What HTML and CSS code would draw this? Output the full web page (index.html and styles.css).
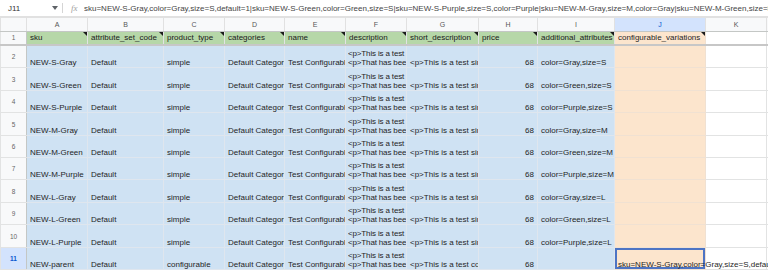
FILE: index.html
```html
<!DOCTYPE html>
<html lang="en">
<head>
  <meta charset="UTF-8" />
  <title>Products sheet</title>
  <link rel="stylesheet" href="styles.css">
</head>
<body>
  <div class="formula-bar">
    <div class="name-box">J11</div>
    <svg class="name-arrow" width="6" height="4" viewBox="0 0 6 4"><path d="M0 0h6L3 4z" fill="#5f6368"/></svg>
    <div class="bar-sep"></div>
    <span class="fx">fx</span>
    <div class="formula">sku=NEW-S-Gray,color=Gray,size=S,default=1|sku=NEW-S-Green,color=Green,size=S|sku=NEW-S-Purple,size=S,color=Purple|sku=NEW-M-Gray,size=M,color=Gray|sku=NEW-M-Green,size=M,color=Green|sku=NEW-M-Purple,size=M,color=Purple</div>
  </div>

  <table class="sheet">
    <colgroup>
      <col class="w-rn"><col class="w-a"><col class="w-b"><col class="w-c"><col class="w-d"><col class="w-e">
      <col class="w-f"><col class="w-g"><col class="w-h"><col class="w-i"><col class="w-j"><col class="w-k"><col class="w-l">
    </colgroup>
    <thead>
      <tr>
        <th class="corner"></th>
        <th>A</th><th>B</th><th>C</th><th>D</th><th>E</th><th>F</th>
        <th>G</th><th>H</th><th>I</th><th class="sel-col">J</th><th>K</th><th></th>
      </tr>
    </thead>
    <tbody>
      <tr class="head-row">
        <th class="rn">1</th>
        <td class="green note">sku</td>
        <td class="green note">attribute_set_code</td>
        <td class="green note">product_type</td>
        <td class="green note">categories</td>
        <td class="green note">name</td>
        <td class="green note">description</td>
        <td class="green note">short_description</td>
        <td class="green note">price</td>
        <td class="green note">additional_attributes</td>
        <td class="orange note">configurable_variations</td>
        <td></td><td></td>
      </tr>
      <!-- product rows -->
      <tr class="r22">
        <th class="rn">2</th>
        <td class="blue">NEW-S-Gray</td><td class="blue">Default</td><td class="blue">simple</td>
        <td class="blue">Default Category</td><td class="blue">Test Configurable</td>
        <td class="blue two"><div>&lt;p&gt;This is a test</div><div>&lt;p&gt;That has been</div></td>
        <td class="blue">&lt;p&gt;This is a test simple</td><td class="blue num">68</td>
        <td class="blue">color=Gray,size=S</td><td class="orange"></td><td></td><td></td>
      </tr>
      <tr class="r23">
        <th class="rn">3</th>
        <td class="blue">NEW-S-Green</td><td class="blue">Default</td><td class="blue">simple</td>
        <td class="blue">Default Category</td><td class="blue">Test Configurable</td>
        <td class="blue two"><div>&lt;p&gt;This is a test</div><div>&lt;p&gt;That has been</div></td>
        <td class="blue">&lt;p&gt;This is a test simple</td><td class="blue num">68</td>
        <td class="blue">color=Green,size=S</td><td class="orange"></td><td></td><td></td>
      </tr>
      <tr class="r22">
        <th class="rn">4</th>
        <td class="blue">NEW-S-Purple</td><td class="blue">Default</td><td class="blue">simple</td>
        <td class="blue">Default Category</td><td class="blue">Test Configurable</td>
        <td class="blue two"><div>&lt;p&gt;This is a test</div><div>&lt;p&gt;That has been</div></td>
        <td class="blue">&lt;p&gt;This is a test simple</td><td class="blue num">68</td>
        <td class="blue">color=Purple,size=S</td><td class="orange"></td><td></td><td></td>
      </tr>
      <tr class="r23">
        <th class="rn">5</th>
        <td class="blue">NEW-M-Gray</td><td class="blue">Default</td><td class="blue">simple</td>
        <td class="blue">Default Category</td><td class="blue">Test Configurable</td>
        <td class="blue two"><div>&lt;p&gt;This is a test</div><div>&lt;p&gt;That has been</div></td>
        <td class="blue">&lt;p&gt;This is a test simple</td><td class="blue num">68</td>
        <td class="blue">color=Gray,size=M</td><td class="orange"></td><td></td><td></td>
      </tr>
      <tr class="r22">
        <th class="rn">6</th>
        <td class="blue">NEW-M-Green</td><td class="blue">Default</td><td class="blue">simple</td>
        <td class="blue">Default Category</td><td class="blue">Test Configurable</td>
        <td class="blue two"><div>&lt;p&gt;This is a test</div><div>&lt;p&gt;That has been</div></td>
        <td class="blue">&lt;p&gt;This is a test simple</td><td class="blue num">68</td>
        <td class="blue">color=Green,size=M</td><td class="orange"></td><td></td><td></td>
      </tr>
      <tr class="r22">
        <th class="rn">7</th>
        <td class="blue">NEW-M-Purple</td><td class="blue">Default</td><td class="blue">simple</td>
        <td class="blue">Default Category</td><td class="blue">Test Configurable</td>
        <td class="blue two"><div>&lt;p&gt;This is a test</div><div>&lt;p&gt;That has been</div></td>
        <td class="blue">&lt;p&gt;This is a test simple</td><td class="blue num">68</td>
        <td class="blue">color=Purple,size=M</td><td class="orange"></td><td></td><td></td>
      </tr>
      <tr class="r23">
        <th class="rn">8</th>
        <td class="blue">NEW-L-Gray</td><td class="blue">Default</td><td class="blue">simple</td>
        <td class="blue">Default Category</td><td class="blue">Test Configurable</td>
        <td class="blue two"><div>&lt;p&gt;This is a test</div><div>&lt;p&gt;That has been</div></td>
        <td class="blue">&lt;p&gt;This is a test simple</td><td class="blue num">68</td>
        <td class="blue">color=Gray,size=L</td><td class="orange"></td><td></td><td></td>
      </tr>
      <tr class="r22">
        <th class="rn">9</th>
        <td class="blue">NEW-L-Green</td><td class="blue">Default</td><td class="blue">simple</td>
        <td class="blue">Default Category</td><td class="blue">Test Configurable</td>
        <td class="blue two"><div>&lt;p&gt;This is a test</div><div>&lt;p&gt;That has been</div></td>
        <td class="blue">&lt;p&gt;This is a test simple</td><td class="blue num">68</td>
        <td class="blue">color=Green,size=L</td><td class="orange"></td><td></td><td></td>
      </tr>
      <tr class="r23">
        <th class="rn">10</th>
        <td class="blue">NEW-L-Purple</td><td class="blue">Default</td><td class="blue">simple</td>
        <td class="blue">Default Category</td><td class="blue">Test Configurable</td>
        <td class="blue two"><div>&lt;p&gt;This is a test</div><div>&lt;p&gt;That has been</div></td>
        <td class="blue">&lt;p&gt;This is a test simple</td><td class="blue num">68</td>
        <td class="blue">color=Purple,size=L</td><td class="orange"></td><td></td><td></td>
      </tr>
      <tr class="r22">
        <th class="rn sel-row">11</th>
        <td class="blue">NEW-parent</td><td class="blue">Default</td><td class="blue">configurable</td>
        <td class="blue">Default Category</td><td class="blue">Test Configurable</td>
        <td class="blue two"><div>&lt;p&gt;This is a test</div><div>&lt;p&gt;That has been</div></td>
        <td class="blue">&lt;p&gt;This is a test configurable</td><td class="blue num">68</td>
        <td class="blue"></td>
        <td class="orange active">sku=NEW-S-Gray,color=Gray,size=S,default=1|sku=NEW-S-Green,color=Green,size=S</td>
        <td></td><td></td>
      </tr>
    </tbody>
  </table>
</body>
</html>
```

FILE: styles.css
```css
body {
  margin: 0;
  font-family: "Liberation Sans", Arial, sans-serif;
  background: #fff;
  color: #1f1f1f;
  overflow: hidden;
}

/* formula bar */
.formula-bar {
  height: 16px;
  display: flex;
  align-items: center;
  border-bottom: 1px solid #e1e1e1;
  font-size: 8px;
  white-space: nowrap;
  overflow: hidden;
}

.name-box {
  flex: none;
  width: 44px;
  padding-left: 8px;
  color: #333;
}

.name-arrow {
  flex: none;
}

.bar-sep {
  flex: none;
  width: 1px;
  height: 10px;
  background: #d5d5d5;
  margin: 0 8px 0 4px;
}

.fx {
  flex: none;
  font-family: "Liberation Serif", serif;
  font-style: italic;
  font-size: 9px;
  color: #a0a0a0;
  width: 13px;
}

.formula {
  flex: 1;
  min-width: 0;
  overflow: hidden;
  color: #444;
}

/* grid */
.sheet {
  border-collapse: collapse;
  table-layout: fixed;
  width: 778px;
  font-size: 8px;
}

.w-rn { width: 26px; }
.w-a { width: 61px; }
.w-b { width: 76px; }
.w-c { width: 61px; }
.w-d { width: 60px; }
.w-e { width: 61px; }
.w-f { width: 61px; }
.w-g { width: 72px; }
.w-h { width: 59px; }
.w-i { width: 77px; }
.w-j { width: 91px; }
.w-k { width: 61px; }
.w-l { width: 12px; }

th, td {
  border: 1px solid #e2e3e3;
  padding: 0 3px 0;
  white-space: nowrap;
  overflow: hidden;
  font-weight: normal;
  line-height: 9px;
  vertical-align: bottom;
  text-align: left;
}

thead th {
  height: 13px;
  background: #f8f9fa;
  color: #575757;
  text-align: center;
  vertical-align: middle;
  padding: 0;
  font-size: 7px;
  border-color: #e1e1e1;
  border-bottom-color: #c4c7c5;
}

thead th.sel-col {
  background: #d3e3fd;
  color: #0b57d0;
}

.rn {
  background: #f8f9fa;
  color: #666;
  text-align: center;
  vertical-align: middle;
  font-size: 6.5px;
  padding: 0;
  border-right-color: #c4c7c5;
}

.rn.sel-row {
  background: #d3e3fd;
  color: #0b57d0;
  font-weight: bold;
}

.head-row th,
.head-row td {
  height: 12px;
  line-height: 10px;
  vertical-align: middle;
  padding-bottom: 0;
  border-bottom: 2px solid #c7c7c7;
}

.r22 th, .r22 td { height: 21px; }
.r23 th, .r23 td { height: 22px; }

.green {
  background: #b6d7a8;
  color: #1a1a1a;
}

.blue {
  background: #cfe2f3;
  border-color: #dfe6ee;
}

.orange {
  background: #fce5cd;
  border-color: #f0e1d2;
}

.note {
  position: relative;
}

.note::after {
  content: "";
  position: absolute;
  top: 0;
  right: 0;
  border-top: 4px solid #1a1a1a;
  border-left: 4px solid transparent;
}

.num {
  text-align: right;
}

.two {
  padding-left: 2px;
  padding-right: 0;
  line-height: 9px;
  letter-spacing: -0.15px;
}

.two div {
  overflow: hidden;
}

.active {
  overflow: visible;
  box-shadow: inset 0 0 0 2px #4d74c4;
  padding-left: 3px;
}
```
